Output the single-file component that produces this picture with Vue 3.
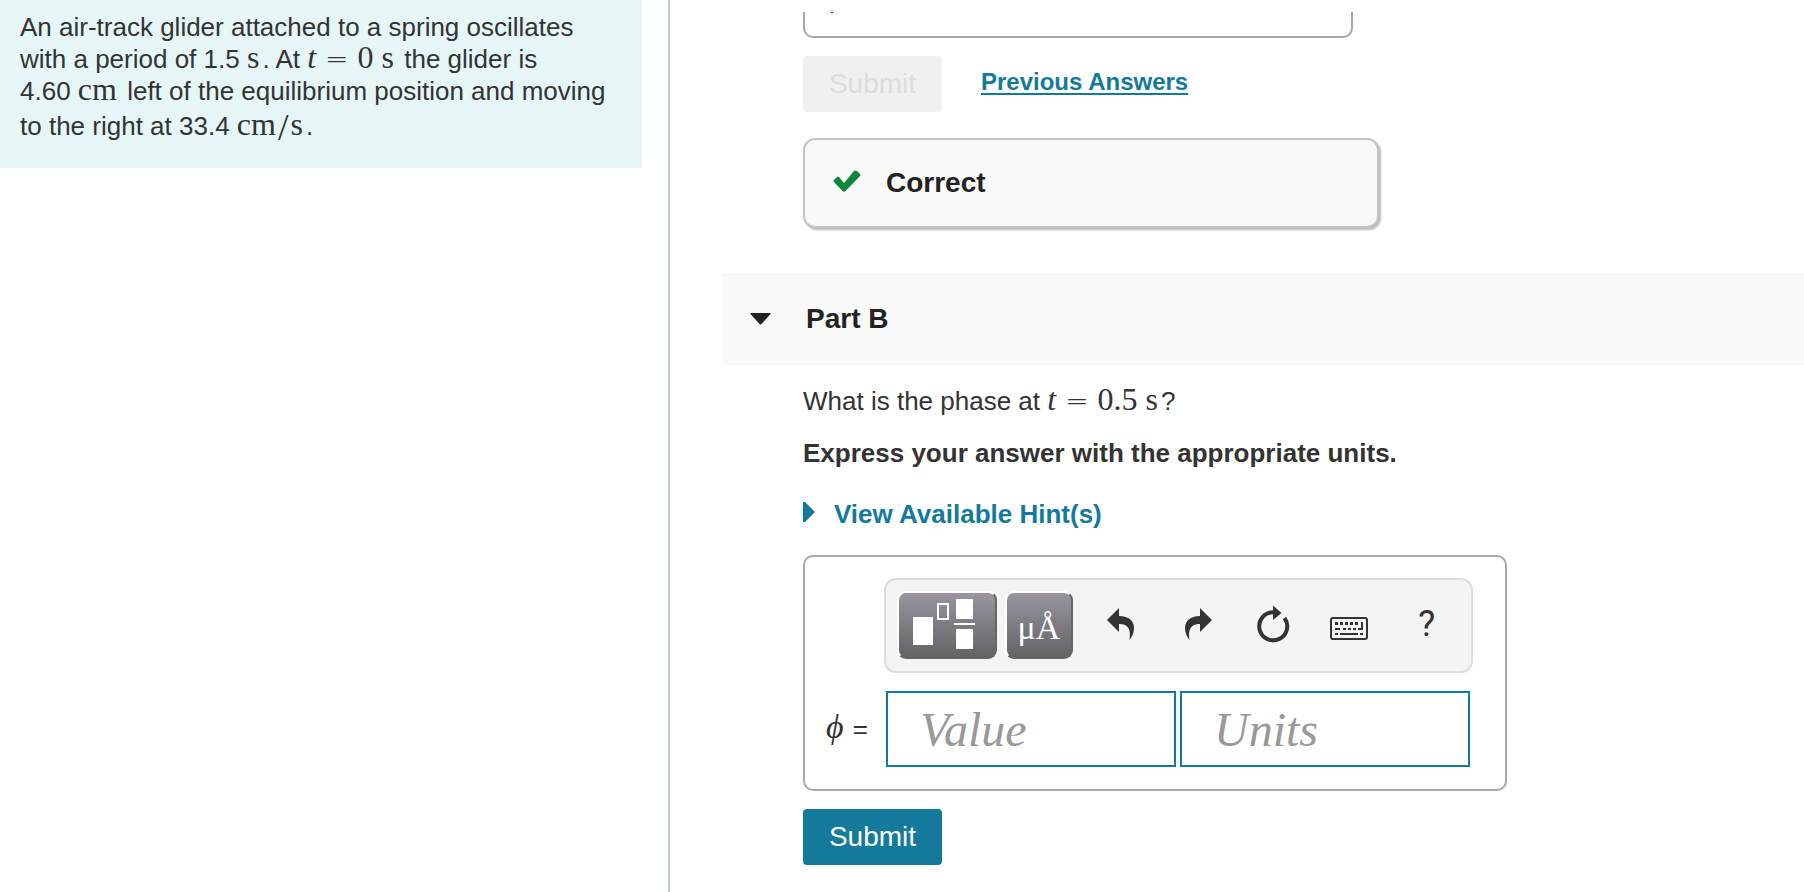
<script setup>
import { ref } from 'vue'

const value = ref('')
const units = ref('')
const showPart = ref(true)

//Keys of the keyboard icon: x, y, width, height
const keys = [
  [5, 18, 3, 3], [10, 18, 3, 3], [15, 18, 3, 3], [20, 18, 3, 3], [25, 18, 3, 3], [31, 18, 2, 8],
  [5, 24, 5, 2], [13, 24, 3, 2], [18, 24, 3, 2], [23, 24, 3, 2], [28, 24, 5, 2],
  [5, 29, 3, 2], [10, 29, 18, 2], [30, 29, 3, 2]
]
</script>

<template>
  <div class="page">
    <aside class="sidebar">
      <p class="problem">
        An air-track glider attached to a spring oscillates<br />
        with a period of 1.5 <span class="math">s</span>. At
        <span class="math"><i>t</i><span class="equals">=</span>0 s</span> the glider is<br />
        4.60 <span class="math">cm</span> left of the equilibrium position and moving<br />
        to the right at 33.4 <span class="math">cm<span class="slash">/</span>s</span>.
      </p>
    </aside>

    <main class="content">
      <section class="part">
        <div class="previous-box"></div>
        <div class="actions">
          <button class="submit" type="button" disabled>Submit</button>
          <a class="previous-link" href="#">Previous Answers</a>
        </div>
        <div class="feedback">
          <svg class="check" viewBox="0 0 28 22" aria-hidden="true">
            <path d="M1 10 L4 7 Q5 6 6 7 L11 13 L21 1 Q22.500 0 24 1 L27 4 Q28 5 27 6 L12.500 21 Q11 22.500 9.500 21 L1 12 Q0 11 1 10Z" />
          </svg>
          <span>Correct</span>
        </div>
      </section>

      <button class="part-header" type="button" :aria-expanded="showPart" @click="showPart = !showPart">
        <svg class="caret" viewBox="0 0 20 12" aria-hidden="true">
          <path d="M0 0 H20 V1 L11 11 Q10 12 9 11 L0 1Z" />
        </svg>
        <span>Part B</span>
      </button>

      <section v-if="showPart" class="part">
        <p class="question">
          What is the phase at
          <span class="math"><i>t</i><span class="equals">=</span>0.5 s</span>?
        </p>
        <p class="instruction">Express your answer with the appropriate units.</p>
        <button class="hints" type="button">
          <svg class="hint-caret" viewBox="0 0 12 20" aria-hidden="true">
            <path d="M0 0 H2 L11 9 Q12 10 11 11 L2 20 H0Z" />
          </svg>
          <span>View Available Hint(s)</span>
        </button>

        <div class="answer-box">
          <div class="toolbar">
            <button class="key templates" type="button" aria-label="Templates">
              <svg viewBox="0 0 96 64">
                <rect x="14" y="24" width="20" height="28" />
                <rect class="outline" x="39" y="11" width="10" height="15" />
                <rect x="57" y="6" width="17" height="20" />
                <rect x="55" y="30" width="21" height="2" />
                <rect x="57" y="36" width="17" height="20" />
              </svg>
            </button>
            <button class="key symbols" type="button">μÅ</button>
            <button class="tool" type="button" aria-label="Undo">
              <svg viewBox="0 0 40 40">
                <path d="M6 16 L18 4 V12 C28 12 33 17 33 24 C33 29 31 33 28.500 36 C30 26 28 20 18 20 V28Z" />
              </svg>
            </button>
            <button class="tool" type="button" aria-label="Redo">
              <svg viewBox="0 0 40 40">
                <path d="M34 16 L22 4 V12 C12 12 7 17 7 24 C7 29 9 33 11.500 36 C10 26 12 20 22 20 V28Z" />
              </svg>
            </button>
            <button class="tool" type="button" aria-label="Reset">
              <svg viewBox="0 0 40 40">
                <path class="ring" d="M30.500 14 A14 14 0 1 1 19.500 8.300" />
                <path d="M19 1.500 L27.500 9 L19 16Z" />
              </svg>
            </button>
            <button class="tool" type="button" aria-label="Keyboard shortcuts">
              <svg viewBox="0 0 40 40">
                <rect class="frame" x="1" y="14" width="36" height="21" rx="2" />
                <rect v-for="(key, i) in keys" :key="i" :x="key[0]" :y="key[1]" :width="key[2]" :height="key[3]" />
              </svg>
            </button>
            <button class="tool help" type="button">?</button>
          </div>
          <label class="symbol" for="value"><i>ϕ</i> =</label>
          <div class="fields">
            <input id="value" v-model="value" type="text" placeholder="Value" />
            <input v-model="units" type="text" placeholder="Units" aria-label="Units" />
          </div>
        </div>
        <button class="submit" type="button">Submit</button>
      </section>
    </main>
  </div>
</template>

<style>
body {
  margin: 0;
  background-color: #fff;
}
</style>

<style scoped>
.page {
  display: grid;
  grid-template-columns: minmax(0, 670fr) minmax(0, 1134fr);
  min-height: 100vh;
  color: #333;
  font-family: 'Liberation Sans', Arial, sans-serif;
  font-size: 26px;
  line-height: 32px;
}
* {
  box-sizing: border-box;
}
p {
  margin: 0;
}
button {
  border: none;
  padding: 0;
  font-family: inherit;
  cursor: pointer;
}
.sidebar {
  border-right: 2px solid #bccadc;
  padding-right: 26px;
}
.problem {
  padding: 11px 20px 21px;
  background-color: #e6f6f7;
}
.math {
  margin-right: 3px;
  font-family: 'Liberation Serif', 'Times New Roman', serif;
  font-size: 32px;
  line-height: 0;
}
.equals {
  margin: 0 9px;
  font-family: 'DejaVu Sans', sans-serif;
  font-size: 28px;
  font-weight: 200;
}
.slash {
  margin: 0 2px;
  font-size: 38px;
  line-height: 40px;
  vertical-align: -5px;
}
.content {
  padding: 12px 0 24px 52px;
}
.part {
  padding: 0 24px 0 81px;
}
.previous-box {
  max-width: 550px;
  height: 26px;
  border: 2px solid #a9a9a9;
  border-top: none;
  border-radius: 0 0 10px 10px;
  padding-left: 26px;
}
/* tail of the symbol that is scrolled out of view */
.previous-box::before {
  content: '';
  display: block;
  width: 2px;
  height: 1px;
  background-color: #333;
}
.actions {
  display: flex;
  align-items: center;
  gap: 39px;
  margin-top: 18px;
}
.submit {
  width: 139px;
  height: 56px;
  border-radius: 4px;
  background-color: #147a9b;
  color: #fff;
  font-size: 28px;
}
.submit:disabled {
  background-color: #f0f0f0;
  color: #dcdcdc;
  cursor: default;
}
.previous-link {
  padding-bottom: 4px;
  color: #147a9b;
  font-size: 24px;
  font-weight: bold;
  text-decoration: underline;
  text-decoration-thickness: 2px;
  text-underline-offset: 3px;
}
.feedback {
  display: flex;
  align-items: center;
  gap: 25px;
  max-width: 576px;
  height: 90px;
  margin: 26px 0 45px;
  border: 2px solid #c4c4c4;
  border-radius: 12px;
  padding: 0 28px;
  background-color: #f9f9f9;
  box-shadow: 2px 2px 2px #bbb;
  color: #222;
  font-size: 28px;
  font-weight: bold;
}
.check {
  width: 28px;
  height: 22px;
  margin-bottom: 4px;
  fill: #12833b;
}
.part-header {
  display: flex;
  align-items: center;
  gap: 35px;
  width: 100%;
  height: 92px;
  padding: 0 28px;
  background-color: #f9f9f9;
  color: #222;
  font-size: 28px;
  font-weight: bold;
}
.caret {
  width: 21px;
  height: 12px;
  fill: #222;
}
.question {
  margin-top: 20px;
}
.instruction {
  margin-top: 20px;
  font-weight: bold;
}
.hints {
  display: flex;
  align-items: center;
  gap: 19px;
  margin: 29px 0 25px;
  background: none;
  color: #147a9b;
  font-size: 26px;
  font-weight: bold;
  line-height: 32px;
}
.hint-caret {
  width: 12px;
  height: 20px;
  margin-bottom: 4px;
  fill: #147a9b;
}
.answer-box {
  display: grid;
  grid-template-columns: 79px minmax(0, 1fr);
  row-gap: 18px;
  max-width: 704px;
  margin-bottom: 18px;
  border: 2px solid #a9a9a9;
  border-radius: 10px;
  padding: 21px 32px 22px 0;
}
.toolbar {
  display: flex;
  grid-column: 2;
  align-items: center;
  height: 95px;
  border: 2px solid #ddd;
  border-radius: 12px;
  padding: 0 6px 2px 11px;
  background-color: #f4f4f4;
}
.key {
  flex: none;
  height: 68px;
  border: 2px solid;
  border-color: #fff #666 #666 #fff;
  border-radius: 9px;
  background: linear-gradient(#9895a1, #636363);
  color: #fff;
}
.key svg {
  display: block;
  width: 96px;
  height: 64px;
  fill: #fff;
}
.key .outline {
  fill: none;
  stroke: #fff;
  stroke-width: 2;
}
.templates {
  width: 100px;
  margin-right: 8px;
}
.symbols {
  width: 68px;
  margin-right: 10px;
  padding-top: 6px;
  font-family: 'Liberation Serif', 'Times New Roman', serif;
  font-size: 34px;
}
.tool {
  display: flex;
  flex: 1;
  align-items: center;
  justify-content: center;
  height: 68px;
  padding-bottom: 2px;
  background: none;
  color: #333;
}
.tool svg {
  width: 40px;
  height: 40px;
  fill: #333;
}
.tool .ring {
  fill: none;
  stroke: #333;
  stroke-width: 4;
}
.tool .frame {
  fill: none;
  stroke: #333;
  stroke-width: 2;
}
.help {
  font-family: Roboto, sans-serif;
  font-size: 36px;
}
.symbol {
  align-self: center;
  padding-left: 21px;
  white-space: nowrap;
}
.symbol i {
  margin-right: 2px;
  font-family: 'Liberation Serif', 'Times New Roman', serif;
  font-size: 34px;
  line-height: 0;
}
.fields {
  display: flex;
  gap: 4px;
  padding: 0 3px 0 2px;
}
.fields input {
  flex: 1;
  min-width: 0;
  height: 76px;
  border: 2px solid #147a9b;
  border-radius: 0;
  padding: 0 32px;
  background-color: #fff;
  color: #333;
  font-family: 'Liberation Serif', 'Times New Roman', serif;
  font-size: 48px;
  font-style: italic;
}
.fields input::placeholder {
  color: #999;
  opacity: 1;
}
</style>
